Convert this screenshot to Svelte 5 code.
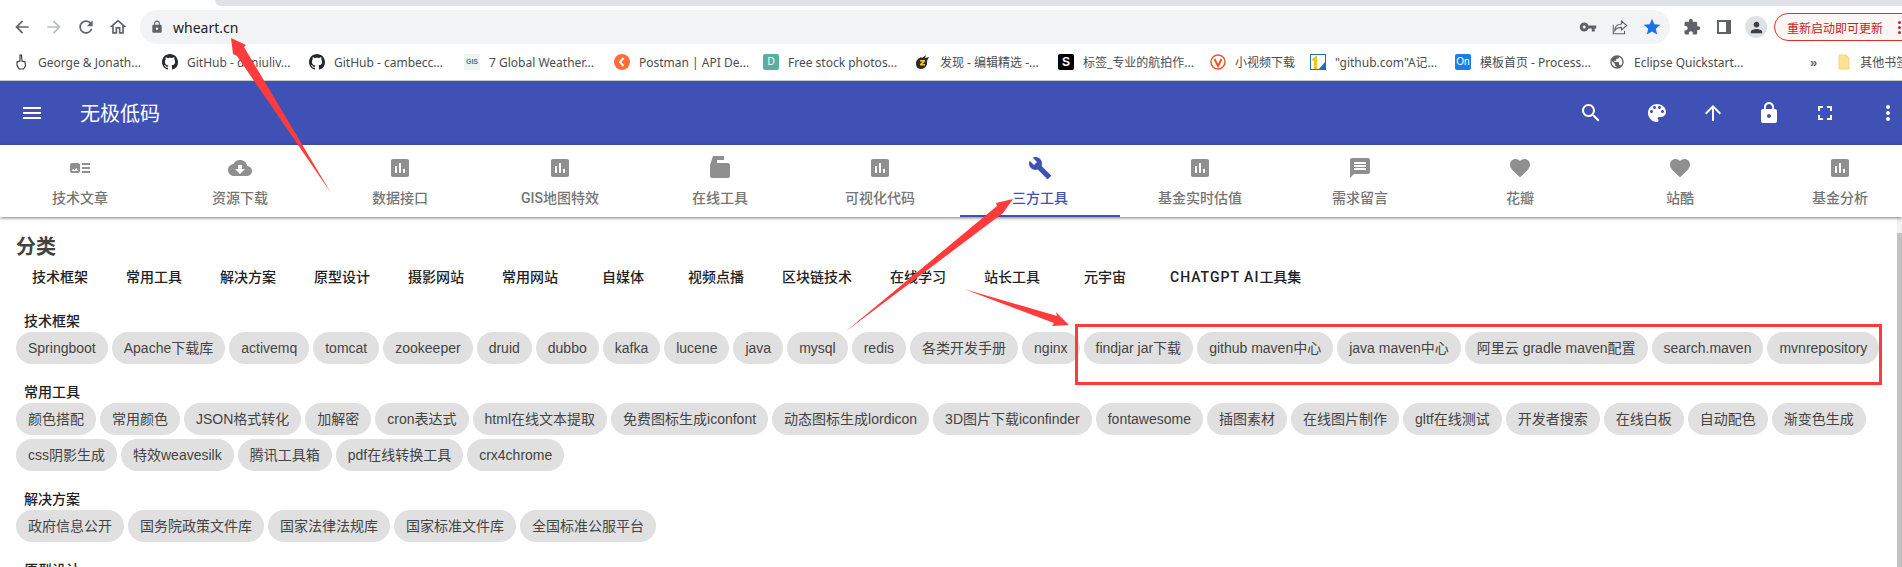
<script lang="ts">
	const icon = {
		back: 'M20 11H7.83l5.59-5.59L12 4l-8 8 8 8 1.41-1.41L7.83 13H20v-2z',
		forward: 'M12 4l-1.41 1.41L16.17 11H4v2h12.17l-5.58 5.59L12 20l8-8z',
		reload: 'M17.65 6.35C16.2 4.9 14.21 4 12 4c-4.42 0-7.99 3.58-7.99 8s3.57 8 7.99 8c3.73 0 6.84-2.55 7.73-6h-2.08c-.82 2.33-3.04 4-5.65 4-3.31 0-6-2.69-6-6s2.69-6 6-6c1.66 0 3.14.69 4.22 1.78L13 11h7V4l-2.35 2.35z',
		home: 'M12 5.69l5 4.5V18h-2v-6H9v6H7v-7.81l5-4.5M12 3L2 12h3v8h6v-6h2v6h6v-8h3L12 3z',
		lock: 'M18 8h-1V6c0-2.76-2.24-5-5-5S7 3.24 7 6v2H6c-1.1 0-2 .9-2 2v10c0 1.1.9 2 2 2h12c1.1 0 2-.9 2-2V10c0-1.1-.9-2-2-2zm-6 9c-1.1 0-2-.9-2-2s.9-2 2-2 2 .9 2 2-.9 2-2 2zm3.1-9H8.9V6c0-1.71 1.39-3.1 3.1-3.1 1.71 0 3.1 1.39 3.1 3.1v2z',
		key: 'M12.65 10C11.83 7.67 9.61 6 7 6c-3.31 0-6 2.69-6 6s2.69 6 6 6c2.61 0 4.83-1.67 5.65-4H17v4h4v-4h2v-4H12.65zM7 14c-1.1 0-2-.9-2-2s.9-2 2-2 2 .9 2 2-.9 2-2 2z',
		star: 'M12 17.27L18.18 21l-1.64-7.03L22 9.24l-7.19-.61L12 2 9.19 8.63 2 9.24l5.46 4.73L5.82 21z',
		puzzle: 'M20.5 11H19V7c0-1.1-.9-2-2-2h-4V3.5C13 2.12 11.88 1 10.5 1S8 2.12 8 3.5V5H4c-1.1 0-1.99.9-1.99 2v3.8H3.5c1.49 0 2.7 1.21 2.7 2.7s-1.21 2.7-2.7 2.7H2V20c0 1.1.9 2 2 2h3.8v-1.5c0-1.49 1.21-2.7 2.7-2.7 1.49 0 2.7 1.21 2.7 2.7V22H17c1.1 0 2-.9 2-2v-4h1.5c1.38 0 2.5-1.12 2.5-2.5S21.88 11 20.5 11z',
		person: 'M12 12c2.21 0 4-1.79 4-4s-1.79-4-4-4-4 1.79-4 4 1.79 4 4 4zm0 2c-2.67 0-8 1.34-8 4v2h16v-2c0-2.66-5.33-4-8-4z',
		globe: 'M12 2C6.48 2 2 6.48 2 12s4.48 10 10 10 10-4.48 10-10S17.52 2 12 2zm-1 17.93c-3.95-.49-7-3.85-7-7.93 0-.62.08-1.21.21-1.79L9 15v1c0 1.1.9 2 2 2v1.93zm6.9-2.54c-.26-.81-1-1.39-1.9-1.39h-1v-3c0-.55-.45-1-1-1H8v-2h2c.55 0 1-.45 1-1V7h2c1.1 0 2-.9 2-2v-.41c2.93 1.19 5 4.06 5 7.41 0 2.08-.8 3.97-2.1 5.39z',
		menu: 'M3 18h18v-2H3v2zm0-5h18v-2H3v2zm0-7v2h18V6H3z',
		search: 'M15.5 14h-.79l-.28-.27C15.41 12.59 16 11.11 16 9.5 16 5.91 13.09 3 9.5 3S3 5.91 3 9.5 5.91 16 9.5 16c1.61 0 3.09-.59 4.23-1.57l.27.28v.79l5 4.99L20.49 19l-4.99-5zm-6 0C7.01 14 5 11.99 5 9.5S7.01 5 9.5 5 14 7.01 14 9.5 11.99 14 9.5 14z',
		palette: 'M12 3c-4.97 0-9 4.03-9 9s4.03 9 9 9c.83 0 1.5-.67 1.5-1.5 0-.39-.15-.74-.39-1.01-.23-.26-.38-.61-.38-.99 0-.83.67-1.5 1.5-1.5H16c2.76 0 5-2.24 5-5 0-4.42-4.03-8-9-8zm-5.5 9c-.83 0-1.5-.67-1.5-1.5S5.67 9 6.5 9 8 9.67 8 10.5 7.33 12 6.5 12zm3-4C8.67 8 8 7.33 8 6.5S8.67 5 9.5 5s1.5.67 1.5 1.5S10.33 8 9.5 8zm5 0c-.83 0-1.5-.67-1.5-1.5S13.67 5 14.5 5s1.5.67 1.5 1.5S15.33 8 14.5 8zm3 4c-.83 0-1.5-.67-1.5-1.5S16.67 9 17.5 9s1.5.67 1.5 1.5-.67 1.5-1.5 1.5z',
		up: 'M4 12l1.41 1.41L11 7.83V20h2V7.83l5.58 5.59L20 12l-8-8-8 8z',
		full: 'M7 14H5v5h5v-2H7v-3zm-2-4h2V7h3V5H5v5zm12 7h-3v2h5v-5h-2v3zM14 5v2h3v3h2V5h-5z',
		more: 'M12 8c1.1 0 2-.9 2-2s-.9-2-2-2-2 .9-2 2 .9 2 2 2zm0 2c-1.1 0-2 .9-2 2s.9 2 2 2 2-.9 2-2-.9-2-2-2zm0 6c-1.1 0-2 .9-2 2s.9 2 2 2 2-.9 2-2-.9-2-2-2z',
		article: 'M22 13h-8v-2h8v2zm0-6h-8v2h8V7zm-8 10h8v-2h-8v2zm-2-8v6c0 1.1-.9 2-2 2H4c-1.1 0-2-.9-2-2V9c0-1.1.9-2 2-2h6c1.1 0 2 .9 2 2zm-1.5 6l-2.25-3-1.75 2.26-1.25-1.51L3.5 15h7z',
		cloud: 'M19.35 10.04C18.67 6.59 15.64 4 12 4 9.11 4 6.6 5.64 5.35 8.04 2.34 8.36 0 10.91 0 14c0 3.31 2.69 6 6 6h13c2.76 0 5-2.24 5-5 0-2.64-2.05-4.78-4.65-4.96zM17 13l-5 5-5-5h3V9h4v4h3z',
		chart: 'M19 3H5c-1.1 0-2 .9-2 2v14c0 1.1.9 2 2 2h14c1.1 0 2-.9 2-2V5c0-1.1-.9-2-2-2zM9 17H7v-7h2v7zm4 0h-2V7h2v10zm4 0h-2v-4h2v4z',
		tool: 'M5 0h11v4H9v3h11c1 0 2 1 2 2v11c0 1-1 2-2 2H4c-1 0-2-1-2-2V9z',
		wrench: 'M22.7 19l-9.1-9.1c.9-2.3.4-5-1.5-6.9-2-2-5-2.4-7.4-1.3L9 6 6 9 1.6 4.7C.4 7.1.9 10.1 2.9 12.1c1.9 1.9 4.6 2.4 6.9 1.5l9.1 9.1c.4.4 1 .4 1.4 0l2.3-2.3c.5-.4.5-1.1.1-1.4z',
		message: 'M20 2H4c-1.1 0-1.99.9-1.99 2L2 22l4-4h14c1.1 0 2-.9 2-2V4c0-1.1-.9-2-2-2zm-2 12H6v-2h12v2zm0-3H6V9h12v2zm0-3H6V6h12v2z',
		heart: 'M12 21.35l-1.45-1.32C5.4 15.36 2 12.28 2 8.5 2 5.42 4.42 3 7.5 3c1.74 0 3.41.81 4.5 2.09C13.09 3.81 14.76 3 16.5 3 19.58 3 22 5.42 22 8.5c0 3.78-3.4 6.86-8.55 11.54L12 21.35z'
	};

	const octocat = 'M8 0C3.58 0 0 3.58 0 8c0 3.54 2.29 6.53 5.47 7.59.4.07.55-.17.55-.38 0-.19-.01-.82-.01-1.49-2.01.37-2.53-.49-2.69-.94-.09-.23-.48-.94-.82-1.13-.28-.15-.68-.52-.01-.53.63-.01 1.08.58 1.23.82.72 1.21 1.87.87 2.33.66.07-.52.28-.87.51-1.07-1.78-.2-3.64-.89-3.64-3.95 0-.87.31-1.59.82-2.15-.08-.2-.36-1.02.08-2.12 0 0 .67-.21 2.2.82.64-.18 1.32-.27 2-.27.68 0 1.36.09 2 .27 1.53-1.04 2.2-.82 2.2-.82.44 1.1.16 1.92.08 2.12.51.56.82 1.27.82 2.15 0 3.07-1.87 3.75-3.65 3.95.29.25.54.73.54 1.48 0 1.07-.01 1.93-.01 2.2 0 .21.15.46.55.38A8.013 8.013 0 0016 8c0-4.42-3.58-8-8-8z';

	// width = distance to the next bookmark, read off the reference
	const bookmarks = [
		{ kind: 'hand', text: 'George & Jonath...', width: 149 },
		{ kind: 'github', text: 'GitHub - daniuliv...', width: 147 },
		{ kind: 'github', text: 'GitHub - cambecc...', width: 155 },
		{ kind: 'gis', text: '7 Global Weather...', width: 150 },
		{ kind: 'postman', text: 'Postman | API De...', width: 149 },
		{ kind: 'pexels', text: 'Free stock photos...', width: 152 },
		{ kind: 'zcool', text: '发现 - 编辑精选 -...', width: 143 },
		{ kind: 'sign', text: '标签_专业的航拍作...', width: 152 },
		{ kind: 'vlog', text: '小视频下载', width: 100 },
		{ kind: 'flag', text: '"github.com"A记...', width: 145 },
		{ kind: 'on', text: '模板首页 - Process...', width: 154 },
		{ kind: 'globe', text: 'Eclipse Quickstart...', width: 190 }
	];

	const navTabs = [
		{ label: '技术文章', path: icon.article },
		{ label: '资源下载', path: icon.cloud },
		{ label: '数据接口', path: icon.chart },
		{ label: 'GIS地图特效', path: icon.chart },
		{ label: '在线工具', path: icon.tool },
		{ label: '可视化代码', path: icon.chart },
		{ label: '三方工具', path: icon.wrench, active: true },
		{ label: '基金实时估值', path: icon.chart },
		{ label: '需求留言', path: icon.message },
		{ label: '花瓣', path: icon.heart },
		{ label: '站酷', path: icon.heart },
		{ label: '基金分析', path: icon.chart }
	];

	const categories = ['技术框架', '常用工具', '解决方案', '原型设计', '摄影网站', '常用网站', '自媒体', '视频点播', '区块链技术', '在线学习', '站长工具', '元宇宙'];

	const sections = [
		{
			title: '技术框架',
			chips: ['Springboot', 'Apache下载库', 'activemq', 'tomcat', 'zookeeper', 'druid', 'dubbo', 'kafka', 'lucene', 'java', 'mysql', 'redis', '各类开发手册', 'nginx', 'findjar jar下载', 'github maven中心', 'java maven中心', '阿里云 gradle maven配置', 'search.maven', 'mvnrepository']
		},
		{
			title: '常用工具',
			chips: ['颜色搭配', '常用颜色', 'JSON格式转化', '加解密', 'cron表达式', 'html在线文本提取', '免费图标生成iconfont', '动态图标生成lordicon', '3D图片下载iconfinder', 'fontawesome', '插图素材', '在线图片制作', 'gltf在线测试', '开发者搜索', '在线白板', '自动配色', '渐变色生成', 'css阴影生成', '特效weavesilk', '腾讯工具箱', 'pdf在线转换工具', 'crx4chrome']
		},
		{
			title: '解决方案',
			chips: ['政府信息公开', '国务院政策文件库', '国家法律法规库', '国家标准文件库', '全国标准公服平台']
		},
		{ title: '原型设计', chips: [] }
	];
</script>

{#snippet glyph(path: string, cls = '')}
	<svg class={cls} viewBox="0 0 24 24" aria-hidden="true"><path d={path} /></svg>
{/snippet}

<div class="page">
	<div class="strip"><div class="strip__rest"></div></div>

	<div class="toolbar">
		{@render glyph(icon.back, 'tb')}
		{@render glyph(icon.forward, 'tb tb--off')}
		{@render glyph(icon.reload, 'tb')}
		{@render glyph(icon.home, 'tb')}
		<div class="omnibox">
			{@render glyph(icon.lock, 'omni-lock')}
			<span class="url">wheart.cn</span>
			<span class="grow"></span>
			{@render glyph(icon.key, 'tb tb--small')}
			<svg class="tb tb--small" viewBox="0 0 24 24" fill="none" aria-hidden="true">
				<path d="M14 4l7 6-7 6v-3.5c-4 0-7 1-9 4.5 0-5 3-8.500 9-9z M3 9v12h15v-4" fill="none" stroke="#5f6368" stroke-width="1.400" />
			</svg>
			{@render glyph(icon.star, 'tb tb--star')}
		</div>
		{@render glyph(icon.puzzle, 'tb tb--ext')}
		<div class="tb-slot"><span class="panel"><span></span></span></div>
		<div class="tb-slot"><span class="avatar">{@render glyph(icon.person)}</span></div>
		<div class="update">
			<span>重新启动即可更新</span>
			<span class="update__dots"><i></i><i></i><i></i></span>
		</div>
	</div>

	<div class="bookmarks">
		{#each bookmarks as b}
			<div class="bm" style="width: {b.width}px">
				{#if b.kind === 'github'}
					<svg class="fav" viewBox="0 0 16 16" aria-hidden="true"><path d={octocat} fill="#24292f" /></svg>
				{:else if b.kind === 'hand'}
					<svg class="fav" viewBox="0 0 16 16" aria-hidden="true">
						<path d="M7 1l1.500 0 .5 6 3 1 .5 4-2 3H6L4 11V8l3-1z" fill="#fff" stroke="#333" stroke-width="1.100" />
					</svg>
				{:else if b.kind === 'gis'}
					<span class="fav fav--gis">GIS</span>
				{:else if b.kind === 'postman'}
					<svg class="fav" viewBox="0 0 16 16" aria-hidden="true">
						<circle cx="8" cy="8" r="8" fill="#ff6c37" />
						<path d="M9.500 4L6 8l3.500 4" fill="none" stroke="#fff" stroke-width="2" />
					</svg>
				{:else if b.kind === 'pexels'}
					<span class="fav fav--pexels">D</span>
				{:else if b.kind === 'zcool'}
					<svg class="fav" viewBox="0 0 16 16" aria-hidden="true">
						<path d="M1 9c0-3 3-5 5-6l1 1 4-3-1 3 4-1-2 4c1 4-2 8-6 8s-5-3-5-6z" fill="#2b2b2b" />
						<path d="M5 6h5v1.500L7.500 10H10v1.500H5V10l2.500-2.500H5z" fill="#f5c518" />
					</svg>
				{:else if b.kind === 'sign'}
					<span class="fav fav--sign">S</span>
				{:else if b.kind === 'vlog'}
					<svg class="fav" viewBox="0 0 16 16" aria-hidden="true">
						<circle cx="8" cy="8" r="7" fill="#fff" stroke="#f0562b" stroke-width="1.500" />
						<path d="M4.500 5L8 12l3.500-7" fill="none" stroke="#f0562b" stroke-width="2" />
					</svg>
				{:else if b.kind === 'flag'}
					<svg class="fav" viewBox="0 0 16 16" aria-hidden="true">
						<rect x=".5" y=".5" width="15" height="15" fill="#fff" stroke="#1a6fb5" />
						<path d="M1 6l6-5v14H4V7z" fill="#f5c518" />
						<path d="M9 15l6-7v7z" fill="#1a6fb5" />
					</svg>
				{:else if b.kind === 'on'}
					<span class="fav fav--on">On</span>
				{:else}
					<svg class="fav" viewBox="0 0 24 24" aria-hidden="true"><path d={icon.globe} fill="#5f6368" /></svg>
				{/if}
				<span class="bm__text">{b.text}</span>
			</div>
		{/each}
		<span class="bm-more">»</span>
		<span class="bm-sep"></span>
		<svg class="fav" viewBox="0 0 16 16" aria-hidden="true">
			<path d="M3 1h7l3 3v11H3z" fill="#fde293" stroke="#f2cf6a" stroke-width=".8" />
		</svg>
		<span class="bm__text bm__text--other">其他书签</span>
	</div>

	<header class="appbar">
		{@render glyph(icon.menu, 'appbar__menu')}
		<span class="appbar__title">无极低码</span>
		<span class="grow"></span>
		<button class="appbtn appbtn--search" aria-label="搜索">{@render glyph(icon.search)}</button>
		<button class="appbtn" aria-label="主题">{@render glyph(icon.palette)}</button>
		<button class="appbtn" aria-label="顶部">{@render glyph(icon.up)}</button>
		<button class="appbtn" aria-label="锁定">{@render glyph(icon.lock)}</button>
		<button class="appbtn" aria-label="全屏">{@render glyph(icon.full)}</button>
		<button class="appbtn appbtn--more" aria-label="更多">{@render glyph(icon.more)}</button>
	</header>

	<nav class="nav">
		{#each navTabs as tab}
			<div class="nav__tab" class:nav__tab--active={tab.active}>
				{@render glyph(tab.path)}
				<span>{tab.label}</span>
			</div>
		{/each}
	</nav>

	<div class="body">
		<main class="content">
			<h2 class="heading">分类</h2>
			<div class="cats">
				{#each categories as cat}
					<span class="cat">{cat}</span>
				{/each}
				<span class="cat"><span class="cat__latin">CHATGPT AI</span>工具集</span>
			</div>
			{#each sections as section}
				<section class="section">
					<h3 class="section__title">{section.title}</h3>
					<div class="chips">
						{#each section.chips as chip}
							<span class="chip">{chip}</span>
						{/each}
					</div>
				</section>
			{/each}
		</main>
		<div class="scrollbar"><div class="scrollbar__thumb"></div></div>
	</div>

	<!-- annotations drawn on top of the screenshot -->
	<svg class="marks" viewBox="0 0 1902 567" aria-hidden="true">
		<polygon points="231,38 246,45 244,47 331,193 237,56 233,54" />
		<polygon points="1013,199 1001,216 1003,213 845,332 997,206 996,203" />
		<polygon points="1069,325 1052,326 1054,323 964,289 1057,316 1056,312" />
		<rect x="1076.500" y="325.500" width="804" height="58" fill="none" stroke="#ff3b3b" stroke-width="3" />
	</svg>
</div>

<style>
	:global(body) {
		margin: 0;
		background: #fff;
	}

	.page {
		position: relative;
		width: 1902px;
		height: 567px;
		overflow: hidden;
		font-family: "Liberation Sans", "Noto Sans CJK SC", sans-serif;
		background: #fff;
	}

	.grow {
		flex: 1;
	}

	svg {
		display: block;
	}

	/* browser chrome */
	.strip {
		height: 6px;
		background: #fff;
	}

	.strip__rest {
		height: 6px;
		margin-left: 215px;
		background: #dee1e6;
		border-bottom-left-radius: 6px;
	}

	.toolbar {
		display: flex;
		align-items: center;
		height: 34px;
		padding: 4px 0 0 6px;
	}

	.toolbar :global(.tb) {
		flex: none;
		width: 32px;
		height: 20px;
		fill: #5f6368;
	}

	.toolbar :global(.tb--off) {
		fill: #babcbe;
	}

	.toolbar :global(.tb--small) {
		height: 18px;
	}

	.toolbar :global(.tb--star) {
		fill: #1a73e8;
	}

	.toolbar :global(.tb--ext) {
		height: 18px;
		margin-left: 6px;
	}

	.tb-slot {
		display: flex;
		align-items: center;
		justify-content: center;
		flex: none;
		width: 32px;
	}

	.panel {
		display: block;
		box-sizing: border-box;
		width: 14px;
		height: 14px;
		border: 2px solid #5f6368;
		background: #5f6368;
	}

	.panel span {
		display: block;
		width: 7px;
		height: 10px;
		background: #fff;
	}

	.avatar {
		display: flex;
		align-items: center;
		justify-content: center;
		width: 22px;
		height: 22px;
		border-radius: 50%;
		background: #dee1e6;
	}

	.avatar :global(svg) {
		width: 17px;
		height: 17px;
		fill: #3c4043;
	}

	.omnibox {
		display: flex;
		flex: 1;
		align-items: center;
		height: 34px;
		margin-left: 6px;
		padding: 0 2px 0 10px;
		background: #f1f3f4;
		border-radius: 17px;
	}

	.omnibox :global(.omni-lock) {
		width: 14px;
		height: 14px;
		fill: #5f6368;
	}

	.url {
		margin-left: 9px;
		font-size: 14px;
		color: #202124;
		font-family: "Noto Sans", sans-serif;
	}

	.update {
		display: flex;
		flex: none;
		align-items: center;
		box-sizing: border-box;
		width: 150px;
		height: 28px;
		margin: 0 -22px 0 2px;
		padding-left: 12px;
		color: #c5221f;
		font-size: 12px;
		background: #fdf6f5;
		border: 1px solid #d93025;
		border-radius: 14px;
	}

	.update__dots {
		display: flex;
		flex-direction: column;
		gap: 2px;
		margin-left: 15px;
	}

	.update__dots i {
		display: block;
		width: 3px;
		height: 3px;
		background: #c5221f;
		border-radius: 50%;
	}

	.bookmarks {
		display: flex;
		align-items: center;
		height: 36px;
		padding-left: 13px;
		border-bottom: 1px solid #c8c9cb;
		box-sizing: content-box;
	}

	.bm {
		display: flex;
		flex: none;
		align-items: center;
		gap: 9px;
		white-space: nowrap;
	}

	.bm__text {
		font-family: "Noto Sans", "Noto Sans CJK SC", sans-serif;
		font-size: 12px;
		color: #4a4d51;
		white-space: nowrap;
	}

	.bm__text--other {
		margin-left: 8px;
	}

	.fav {
		flex: none;
		display: block;
		width: 16px;
		height: 16px;
	}

	.fav--gis {
		font-size: 7px;
		font-weight: 700;
		line-height: 16px;
		text-align: center;
		color: #3f7d83;
		background: #eef4f4;
	}

	.fav--pexels {
		font-size: 10px;
		line-height: 16px;
		text-align: center;
		color: #fff;
		background: #57b09f;
		border-radius: 2px;
	}

	.fav--sign {
		font-size: 12px;
		font-weight: 700;
		line-height: 16px;
		text-align: center;
		color: #fff;
		background: #000;
		border-radius: 2px;
	}

	.fav--on {
		font-size: 10px;
		line-height: 16px;
		text-align: center;
		color: #fff;
		background: #1a7ee6;
		border-radius: 2px;
	}

	.bm-more {
		margin-left: 11px;
		font-size: 13px;
		font-weight: 700;
		color: #5f6368;
	}

	.bm-sep {
		width: 1px;
		height: 16px;
		margin: 0 9px 0 10px;
		background: #c8c9cb;
	}

	/* app */
	.appbar {
		display: flex;
		align-items: center;
		height: 64px;
		color: #fff;
		background: #3f51b5;
	}

	.appbar :global(.appbar__menu) {
		width: 24px;
		height: 24px;
		margin-left: 20px;
		fill: #fff;
	}

	.appbar__title {
		margin-left: 36px;
		padding-bottom: 2px;
		font-family: "Noto Sans CJK SC", sans-serif;
		font-size: 20px;
	}

	.appbtn {
		display: flex;
		align-items: center;
		justify-content: center;
		flex: none;
		width: 56px;
		height: 56px;
		padding: 0;
		background: none;
		border: 0;
	}

	.appbtn :global(svg) {
		width: 24px;
		height: 24px;
		fill: #fff;
	}

	.appbtn--search {
		margin-right: 10px;
	}

	.appbtn--more {
		width: 28px;
		margin-left: 21px;
	}

	.nav {
		position: relative;
		z-index: 1;
		display: flex;
		height: 72px;
		background: #fff;
		box-shadow: 0 1px 5px rgba(0, 0, 0, 0.2), 0 2px 2px rgba(0, 0, 0, 0.14), 0 3px 1px -2px rgba(0, 0, 0, 0.12);
	}

	.nav__tab {
		display: flex;
		flex: 0 0 160px;
		flex-direction: column;
		align-items: center;
		box-sizing: border-box;
		padding-top: 11px;
		color: #757575;
		font-family: Roboto, "Noto Sans CJK SC", sans-serif;
		font-size: 14px;
		font-weight: 500;
		line-height: 20px;
	}

	.nav__tab :global(svg) {
		width: 24px;
		height: 24px;
		margin-bottom: 8px;
		fill: #8f8f8f;
	}

	.nav__tab--active {
		color: #3f51b5;
		border-bottom: 2px solid #3f51b5;
	}

	.nav__tab--active :global(svg) {
		fill: #3f51b5;
	}

	.body {
		display: flex;
	}

	.content {
		flex: 1;
		padding: 17px 0 0 14px;
	}

	.heading {
		height: 26px;
		margin: 0 0 0 2px;
		color: #424242;
		font-family: Roboto, "Noto Sans CJK SC", sans-serif;
		font-size: 20px;
		font-weight: 700;
		line-height: 26px;
	}

	.cats {
		display: flex;
		align-items: center;
		height: 32px;
		margin-left: -1px;
		margin-bottom: 19px;
	}

	.cat {
		box-sizing: border-box;
		flex: none;
		min-width: 92px;
		padding: 0 19px;
		color: #212121;
		font-family: Roboto, "Noto Sans CJK SC", sans-serif;
		font-size: 14px;
		font-weight: 500;
		text-align: center;
		white-space: nowrap;
	}

	.cat__latin {
		letter-spacing: 1px;
	}

	.section {
		margin-bottom: 16px;
	}

	.section__title {
		margin: 0 0 -2px 10px;
		color: #212121;
		font-size: 14px;
		font-weight: 500;
		line-height: 21px;
		font-family: Roboto, "Noto Sans CJK SC", sans-serif;
	}

	.chips {
		display: flex;
		flex-wrap: wrap;
	}

	.chip {
		height: 32px;
		margin: 2px;
		padding: 0 12px;
		color: #444;
		font-size: 14px;
		line-height: 32px;
		white-space: nowrap;
		background: #e0e0e0;
		border-radius: 16px;
	}

	.scrollbar {
		flex: none;
		width: 5px;
		height: 350px;
		padding-top: 16px;
		background: #f1f1f1;
	}

	.scrollbar__thumb {
		height: 100%;
		background: #c1c1c1;
	}

	.marks {
		position: absolute;
		inset: 0;
		z-index: 2;
		pointer-events: none;
		fill: #ff3b3b;
	}
</style>
